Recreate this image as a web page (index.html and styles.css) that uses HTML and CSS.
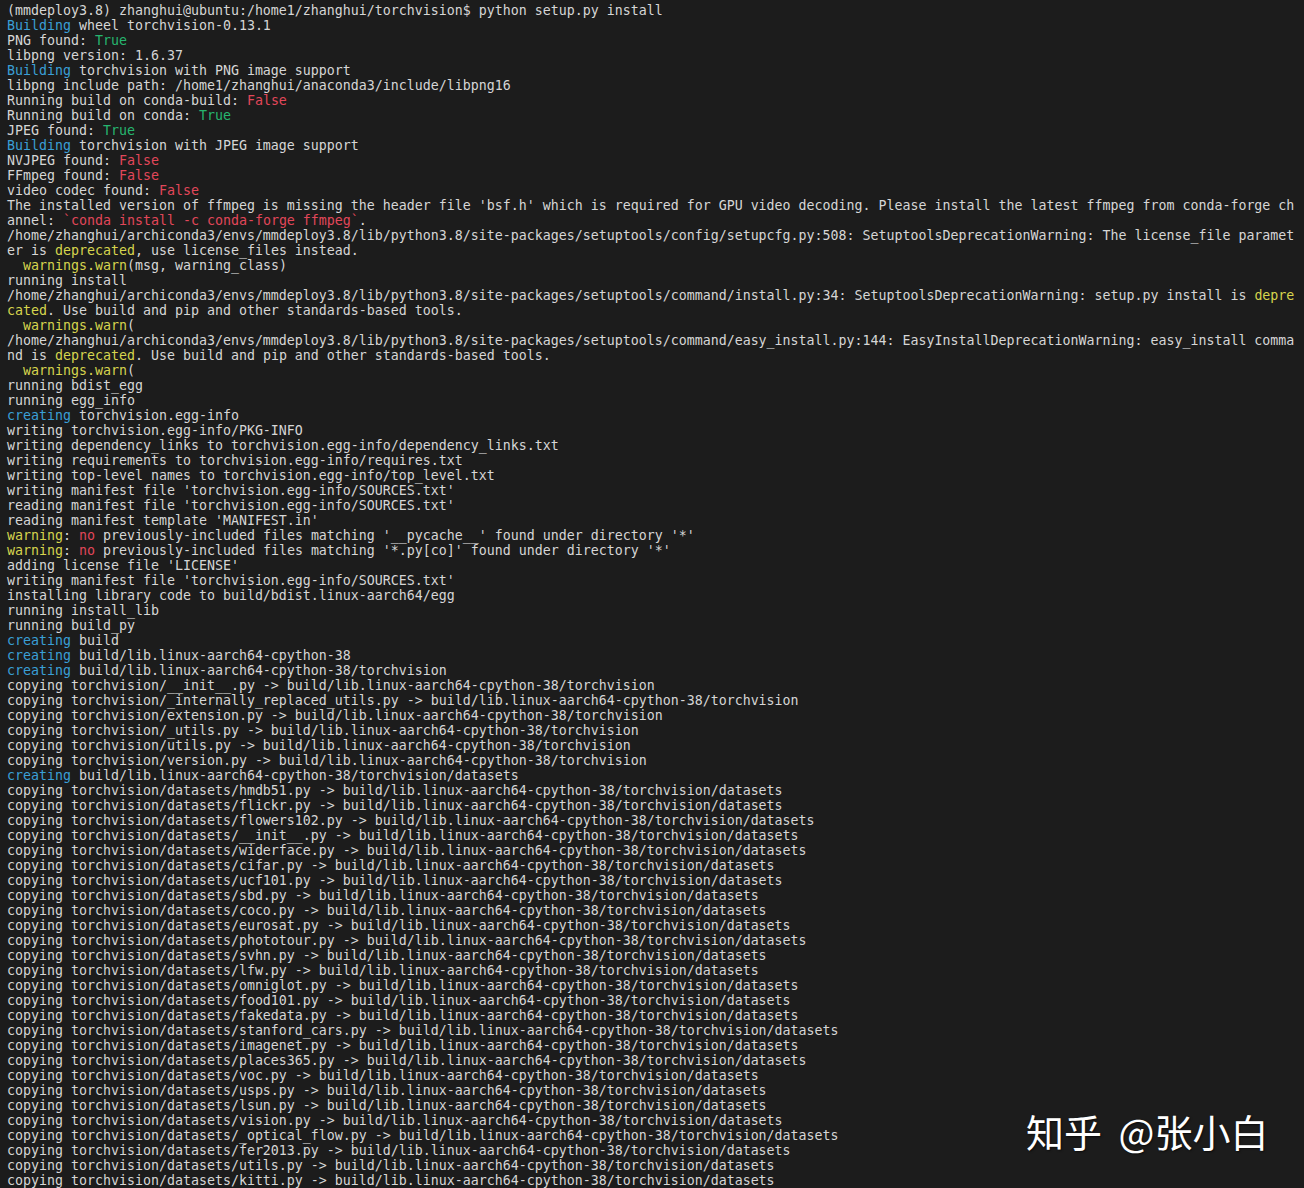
FILE: index.html
```html
<!DOCTYPE html>
<html>
<head>
    <meta charset="utf-8">
    <title>torchvision install</title>
    <link rel="stylesheet" href="styles.css">
</head>
<body>
<div class="terminal">
<pre class="output">(mmdeploy3.8) zhanghui@ubuntu:/home1/zhanghui/torchvision$ python setup.py install
<span class="b">Building</span> wheel torchvision-0.13.1
PNG found: <span class="g">True</span>
libpng version: 1.6.37
<span class="b">Building</span> torchvision with PNG image support
libpng include path: /home1/zhanghui/anaconda3/include/libpng16
Running build on conda-build: <span class="r">False</span>
Running build on conda: <span class="g">True</span>
JPEG found: <span class="g">True</span>
<span class="b">Building</span> torchvision with JPEG image support
NVJPEG found: <span class="r">False</span>
FFmpeg found: <span class="r">False</span>
video codec found: <span class="r">False</span>
The installed version of ffmpeg is missing the header file 'bsf.h' which is required for GPU video decoding. Please install the latest ffmpeg from conda-forge ch
annel: <span class="r">`conda install -c conda-forge ffmpeg`</span>.
/home/zhanghui/archiconda3/envs/mmdeploy3.8/lib/python3.8/site-packages/setuptools/config/setupcfg.py:508: SetuptoolsDeprecationWarning: The license_file paramet
er is <span class="y">deprecated</span>, use license_files instead.
  <span class="y">warnings.warn</span>(msg, warning_class)
running install
/home/zhanghui/archiconda3/envs/mmdeploy3.8/lib/python3.8/site-packages/setuptools/command/install.py:34: SetuptoolsDeprecationWarning: setup.py install is <span class="y">depre</span>
<span class="y">cated</span>. Use build and pip and other standards-based tools.
  <span class="y">warnings.warn</span>(
/home/zhanghui/archiconda3/envs/mmdeploy3.8/lib/python3.8/site-packages/setuptools/command/easy_install.py:144: EasyInstallDeprecationWarning: easy_install comma
nd is <span class="y">deprecated</span>. Use build and pip and other standards-based tools.
  <span class="y">warnings.warn</span>(
running bdist_egg
running egg_info
<span class="b">creating</span> torchvision.egg-info
writing torchvision.egg-info/PKG-INFO
writing dependency_links to torchvision.egg-info/dependency_links.txt
writing requirements to torchvision.egg-info/requires.txt
writing top-level names to torchvision.egg-info/top_level.txt
writing manifest file 'torchvision.egg-info/SOURCES.txt'
reading manifest file 'torchvision.egg-info/SOURCES.txt'
reading manifest template 'MANIFEST.in'
<span class="y">warning</span>: <span class="r">no</span> previously-included files matching '__pycache__' found under directory '*'
<span class="y">warning</span>: <span class="r">no</span> previously-included files matching '*.py[co]' found under directory '*'
adding license file 'LICENSE'
writing manifest file 'torchvision.egg-info/SOURCES.txt'
installing library code to build/bdist.linux-aarch64/egg
running install_lib
running build_py
<span class="b">creating</span> build
<span class="b">creating</span> build/lib.linux-aarch64-cpython-38
<span class="b">creating</span> build/lib.linux-aarch64-cpython-38/torchvision
copying torchvision/__init__.py -> build/lib.linux-aarch64-cpython-38/torchvision
copying torchvision/_internally_replaced_utils.py -> build/lib.linux-aarch64-cpython-38/torchvision
copying torchvision/extension.py -> build/lib.linux-aarch64-cpython-38/torchvision
copying torchvision/_utils.py -> build/lib.linux-aarch64-cpython-38/torchvision
copying torchvision/utils.py -> build/lib.linux-aarch64-cpython-38/torchvision
copying torchvision/version.py -> build/lib.linux-aarch64-cpython-38/torchvision
<span class="b">creating</span> build/lib.linux-aarch64-cpython-38/torchvision/datasets
copying torchvision/datasets/hmdb51.py -> build/lib.linux-aarch64-cpython-38/torchvision/datasets
copying torchvision/datasets/flickr.py -> build/lib.linux-aarch64-cpython-38/torchvision/datasets
copying torchvision/datasets/flowers102.py -> build/lib.linux-aarch64-cpython-38/torchvision/datasets
copying torchvision/datasets/__init__.py -> build/lib.linux-aarch64-cpython-38/torchvision/datasets
copying torchvision/datasets/widerface.py -> build/lib.linux-aarch64-cpython-38/torchvision/datasets
copying torchvision/datasets/cifar.py -> build/lib.linux-aarch64-cpython-38/torchvision/datasets
copying torchvision/datasets/ucf101.py -> build/lib.linux-aarch64-cpython-38/torchvision/datasets
copying torchvision/datasets/sbd.py -> build/lib.linux-aarch64-cpython-38/torchvision/datasets
copying torchvision/datasets/coco.py -> build/lib.linux-aarch64-cpython-38/torchvision/datasets
copying torchvision/datasets/eurosat.py -> build/lib.linux-aarch64-cpython-38/torchvision/datasets
copying torchvision/datasets/phototour.py -> build/lib.linux-aarch64-cpython-38/torchvision/datasets
copying torchvision/datasets/svhn.py -> build/lib.linux-aarch64-cpython-38/torchvision/datasets
copying torchvision/datasets/lfw.py -> build/lib.linux-aarch64-cpython-38/torchvision/datasets
copying torchvision/datasets/omniglot.py -> build/lib.linux-aarch64-cpython-38/torchvision/datasets
copying torchvision/datasets/food101.py -> build/lib.linux-aarch64-cpython-38/torchvision/datasets
copying torchvision/datasets/fakedata.py -> build/lib.linux-aarch64-cpython-38/torchvision/datasets
copying torchvision/datasets/stanford_cars.py -> build/lib.linux-aarch64-cpython-38/torchvision/datasets
copying torchvision/datasets/imagenet.py -> build/lib.linux-aarch64-cpython-38/torchvision/datasets
copying torchvision/datasets/places365.py -> build/lib.linux-aarch64-cpython-38/torchvision/datasets
copying torchvision/datasets/voc.py -> build/lib.linux-aarch64-cpython-38/torchvision/datasets
copying torchvision/datasets/usps.py -> build/lib.linux-aarch64-cpython-38/torchvision/datasets
copying torchvision/datasets/lsun.py -> build/lib.linux-aarch64-cpython-38/torchvision/datasets
copying torchvision/datasets/vision.py -> build/lib.linux-aarch64-cpython-38/torchvision/datasets
copying torchvision/datasets/_optical_flow.py -> build/lib.linux-aarch64-cpython-38/torchvision/datasets
copying torchvision/datasets/fer2013.py -> build/lib.linux-aarch64-cpython-38/torchvision/datasets
copying torchvision/datasets/utils.py -> build/lib.linux-aarch64-cpython-38/torchvision/datasets
copying torchvision/datasets/kitti.py -> build/lib.linux-aarch64-cpython-38/torchvision/datasets</pre>
<div class="watermark">知乎 @张小白</div>
</div>
</body>
</html>
```

FILE: styles.css
```css
/* Terminal */
html, body {
    margin: 0;
    padding: 0;
    background-color: #1c1c1c;
}
.terminal {
    position: relative;
    width: 1304px;
    height: 1188px;
    overflow: hidden;
    background-color: #1c1c1c;
}
.output {
    margin: 0;
    padding: 3px 0 0 7px;
    font-family: "DejaVu Sans Mono", "Liberation Mono", monospace;
    font-size: 13.29px;
    line-height: 15px;
    color: #d6d6d6;
    white-space: pre;
}
.b {
    color: #3a9fd6;
}
.g {
    color: #26b56f;
}
.r {
    color: #e2475a;
}
.y {
    color: #d6d44e;
}
/* Watermark */
.watermark {
    position: absolute;
    left: 1026px;
    top: 1105px;
    font-family: "Noto Sans CJK SC", "Noto Sans", sans-serif;
    font-size: 38px;
    line-height: 52px;
    word-spacing: 8px;
    color: #ffffff;
    text-shadow: 1px 1px 2px rgba(0, 0, 0, 0.6);
    white-space: nowrap;
}
```
